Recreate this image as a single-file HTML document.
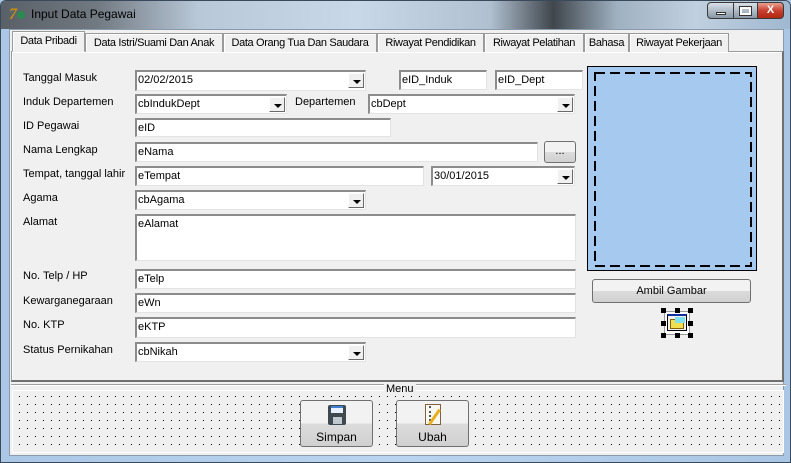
<!DOCTYPE html>
<html><head><meta charset="utf-8"><style>
*{margin:0;padding:0;box-sizing:border-box}
body{width:791px;height:463px;overflow:hidden;position:relative;font-family:"Liberation Sans",sans-serif;font-size:11px;color:#000;background:#a9c6e4}
.a{position:absolute}
.frame{left:0;top:0;width:791px;height:463px;border:1px solid #3a4a5a;background:linear-gradient(90deg,#aac8e6,#b9d4ee 50%,#a9c6e4);border-radius:6px 6px 0 0}
.title{left:1px;top:1px;width:789px;height:28px;background:linear-gradient(90deg,#5a6068 0,#707880 12%,#b8c8d8 25%,#c8d8e8 45%,#b0c0d0 62%,#40464c 70%,#9fb0c0 78%,#c0d0e0 88%,#a0b8d0 100%);border-radius:5px 5px 0 0}
.client{left:9px;top:29px;width:775px;height:427px;background:#f0f0f0;border:1px solid #8a9aaa}
.lbl{position:absolute;font-size:11px;white-space:nowrap}
.ed{position:absolute;background:#fff;border-top:2px solid #8c8c8c;border-left:2px solid #8c8c8c;border-right:1px solid #e3e3e3;border-bottom:1px solid #e3e3e3;padding:2px 1px;font-size:11px;line-height:13px;white-space:nowrap;overflow:hidden}
.dd{position:absolute;right:1px;top:1px;width:16px;height:15px;background:#f0f0f0;border:1px solid;border-color:#fff #6a6a6a #6a6a6a #fff}
.dd:after{content:"";position:absolute;left:4px;top:6px;border-left:4px solid transparent;border-right:4px solid transparent;border-top:4px solid #000}
.tab{position:absolute;top:33px;height:19px;border:1px solid #9a9a9a;border-bottom:none;background:#f0f0f0;padding:3px 0 0;text-align:center;font-size:11px;letter-spacing:-0.35px;white-space:nowrap;box-shadow:inset 1px 1px #fff}
.btn{position:absolute;border:1px solid #707070;border-radius:3px;background:linear-gradient(#f2f2f2 50%,#dcdcdc 50%,#d0d0d0);text-align:center;font-size:11px}
.cb{position:absolute;top:2px;width:24px;height:17px;border:1px solid #3a3a3a;color:#fff;font-weight:bold;text-align:center;line-height:14px;font-size:11px}
</style></head><body>
<div class="a frame"></div>
<div class="a title"></div>
<div class="a" style="left:9px;top:6px;width:14px;height:17px;font:bold italic 16px 'Liberation Serif',serif;color:#c89010;line-height:17px">7</div>
<div class="a" style="left:17px;top:11px;width:8px;height:8px;border-radius:50%;background:#2a8a50"></div>
<div class="a" style="left:31px;top:7px;font-size:12px;color:#000">Input Data Pegawai</div>
<div class="cb" style="left:707px;width:27px;border-radius:4px 0 0 4px;background:linear-gradient(#d8e0e8,#8a98a8)"><span style="display:inline-block;width:10px;height:3px;background:#fff;border:1px solid #333;margin-top:9px"></span></div>
<div class="cb" style="left:733px;width:25px;background:linear-gradient(#d8e0e8,#8a98a8)"><span style="display:inline-block;width:11px;height:8px;border:2px solid #fff;outline:1px solid #333;margin-top:4px"></span></div>
<div class="cb" style="left:757px;width:27px;border-radius:0 4px 4px 0;background:linear-gradient(#e8a090,#c84030 50%,#b02810)">X</div>
<div class="a client"></div>
<div class="a" style="left:11px;top:51px;width:773px;height:331px;border:1px solid #9a9a9a;border-right:2px solid #707070;border-bottom:2px solid #707070;background:#f0f0f0;box-shadow:inset 1px 1px #fff"></div>
<div class="tab" style="left:12px;top:31px;height:21px;width:73px;background:#f0f0f0;border-bottom:1px solid #f0f0f0;z-index:2">Data Pribadi</div>
<div class="tab" style="left:85px;width:138px">Data Istri/Suami Dan Anak</div>
<div class="tab" style="left:223px;width:154px">Data Orang Tua Dan Saudara</div>
<div class="tab" style="left:377px;width:107px">Riwayat Pendidikan</div>
<div class="tab" style="left:484px;width:100px">Riwayat Pelatihan</div>
<div class="tab" style="left:584px;width:45px">Bahasa</div>
<div class="tab" style="left:629px;width:100px">Riwayat Pekerjaan</div>

<div class="lbl" style="left:23px;top:72px">Tanggal Masuk</div>
<div class="ed" style="left:135px;top:70px;width:231px;height:21px">02/02/2015<div class="dd"></div></div>
<div class="ed" style="left:399px;top:70px;width:88px;height:20px">eID_Induk</div>
<div class="ed" style="left:495px;top:70px;width:88px;height:20px">eID_Dept</div>

<div class="lbl" style="left:23px;top:96px">Induk Departemen</div>
<div class="ed" style="left:135px;top:94px;width:152px;height:20px">cbIndukDept<div class="dd"></div></div>
<div class="lbl" style="left:295px;top:96px">Departemen</div>
<div class="ed" style="left:368px;top:94px;width:207px;height:20px">cbDept<div class="dd"></div></div>

<div class="lbl" style="left:23px;top:120px">ID Pegawai</div>
<div class="ed" style="left:135px;top:118px;width:256px;height:19px">eID</div>

<div class="lbl" style="left:23px;top:144px">Nama Lengkap</div>
<div class="ed" style="left:135px;top:142px;width:403px;height:20px">eNama</div>
<div class="btn" style="left:544px;top:141px;width:32px;height:22px;line-height:18px">...</div>

<div class="lbl" style="left:23px;top:168px">Tempat, tanggal lahir</div>
<div class="ed" style="left:135px;top:166px;width:289px;height:20px">eTempat</div>
<div class="ed" style="left:431px;top:166px;width:144px;height:20px">30/01/2015<div class="dd"></div></div>

<div class="lbl" style="left:23px;top:192px">Agama</div>
<div class="ed" style="left:135px;top:190px;width:231px;height:20px">cbAgama<div class="dd"></div></div>

<div class="lbl" style="left:23px;top:216px">Alamat</div>
<div class="ed" style="left:135px;top:214px;width:441px;height:47px">eAlamat</div>

<div class="lbl" style="left:23px;top:270px">No. Telp / HP</div>
<div class="ed" style="left:135px;top:269px;width:441px;height:20px">eTelp</div>
<div class="lbl" style="left:23px;top:295px">Kewarganegaraan</div>
<div class="ed" style="left:135px;top:293px;width:441px;height:20px">eWn</div>
<div class="lbl" style="left:23px;top:319px">No. KTP</div>
<div class="ed" style="left:135px;top:317px;width:441px;height:21px">eKTP</div>
<div class="lbl" style="left:23px;top:344px">Status Pernikahan</div>
<div class="ed" style="left:135px;top:342px;width:231px;height:20px">cbNikah<div class="dd"></div></div>

<svg class="a" style="left:587px;top:66px" width="170" height="205">
 <rect x="0.5" y="0.5" width="169" height="204" fill="#a6c9ef" stroke="#000"/>
 <rect x="8" y="7" width="156" height="193" fill="none" stroke="#000" stroke-width="2" stroke-dasharray="10 5"/>
</svg>
<div class="btn" style="left:592px;top:279px;width:159px;height:24px;line-height:22px">Ambil Gambar</div>
<div class="a" style="left:664px;top:311px;width:26px;height:24px;border:1px solid #999;background:#fff"></div>
<div class="a" style="left:667px;top:314px;width:20px;height:17px;border:1px solid #000;border-top:2px solid #1030a0;background:#f0f0f0"></div>
<div class="a" style="left:670px;top:319px;width:14px;height:10px;background:#f0e050;border:1px solid #806000"></div>
<div class="a" style="left:675px;top:317px;width:10px;height:6px;background:#80e0f0"></div>
<div class="a" style="left:661px;top:308px;width:5px;height:5px;background:#000"></div>
<div class="a" style="left:675px;top:308px;width:5px;height:5px;background:#000"></div>
<div class="a" style="left:688px;top:308px;width:5px;height:5px;background:#000"></div>
<div class="a" style="left:661px;top:321px;width:5px;height:5px;background:#000"></div>
<div class="a" style="left:688px;top:321px;width:5px;height:5px;background:#000"></div>
<div class="a" style="left:661px;top:333px;width:5px;height:5px;background:#000"></div>
<div class="a" style="left:675px;top:333px;width:5px;height:5px;background:#000"></div>
<div class="a" style="left:688px;top:333px;width:5px;height:5px;background:#000"></div>

<div class="a" style="left:11px;top:384px;width:775px;height:71px;border-top:1px solid #a0a0a0;box-shadow:inset 0 1px #fff"></div>
<svg class="a" style="left:12px;top:390px" width="772" height="63">
 <defs><pattern id="p" width="8" height="8" patternUnits="userSpaceOnUse" x="7" y="6"><rect width="1" height="1" fill="#000"/></pattern></defs>
 <rect width="772" height="63" fill="url(#p)"/>
 <rect x="0.5" y="0.5" width="771" height="62" fill="none" stroke="#fff"/>
</svg>
<div class="lbl" style="left:384px;top:383px;background:#f0f0f0;padding:0 2px">Menu</div>
<div class="btn" style="left:300px;top:400px;width:73px;height:47px">
 <div style="width:18px;height:20px;margin:4px auto 0;background:#404850;border-radius:2px;position:relative">
  <div style="position:absolute;left:3px;top:1px;width:12px;height:7px;background:#e8f0ff;border-top:2px solid #4080d0"></div>
  <div style="position:absolute;left:5px;top:12px;width:9px;height:7px;background:#c0c8d0"></div></div>
 <div style="margin-top:5px;font-size:12px">Simpan</div></div>
<div class="btn" style="left:396px;top:400px;width:73px;height:47px">
 <div style="width:16px;height:21px;margin:3px auto 0;background:#f8f8f0;border:1px solid #806040;position:relative">
  <div style="position:absolute;left:3px;top:1px;width:2px;height:19px;border-left:2px dotted #555"></div>
  <div style="position:absolute;left:7px;top:3px;width:3px;height:18px;background:#e8b020;transform:rotate(35deg)"></div></div>
 <div style="margin-top:5px;font-size:12px">Ubah</div></div>
</body></html>
